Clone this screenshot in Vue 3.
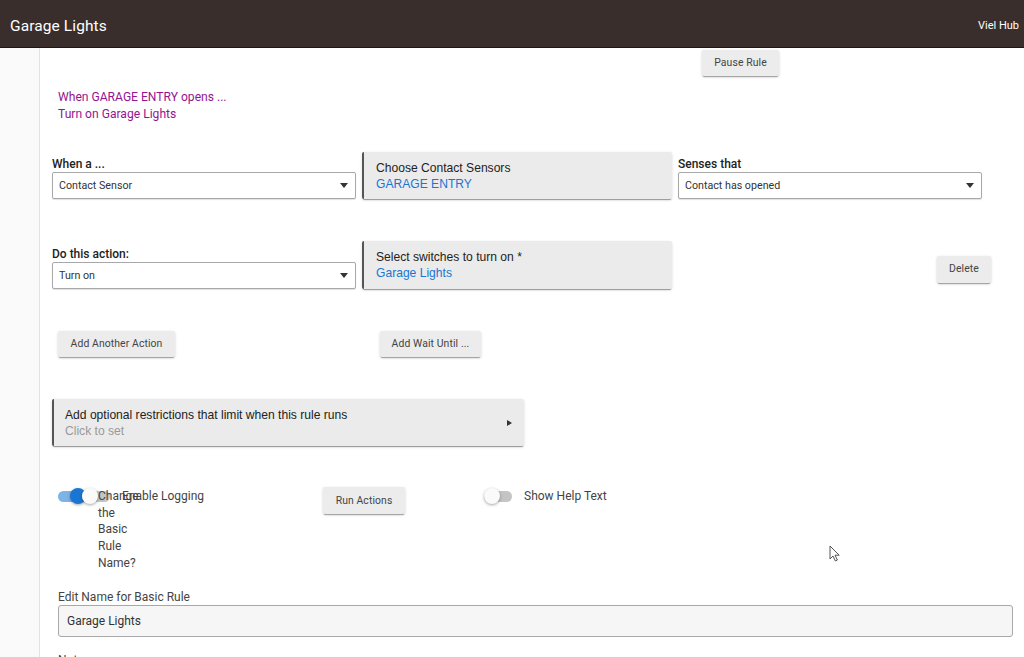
<script setup>
const pickers = [
  {
    id: 'trigger',
    label: 'When a ...',
    value: 'Contact Sensor',
    title: 'Choose Contact Sensors',
    link: 'GARAGE ENTRY',
    sideLabel: 'Senses that',
    sideValue: 'Contact has opened'
  },
  {
    id: 'action',
    label: 'Do this action:',
    value: 'Turn on',
    title: 'Select switches to turn on *',
    link: 'Garage Lights'
  }
]
</script>

<template>
  <div class="page">
    <header class="topbar">
      <span class="title">Garage Lights</span>
      <span class="hub">Viel Hub</span>
    </header>
    <div class="body">
      <aside class="rail"></aside>
      <main class="content">
        <div class="pause-row"><button class="btn">Pause Rule</button></div>
        <p class="summary">When GARAGE ENTRY opens ...<br />Turn on Garage Lights</p>

        <section
          v-for="row in pickers"
          :key="row.id"
          class="picker-row"
          :class="'picker-row-' + row.id"
        >
          <div class="field">
            <div class="field-label">{{ row.label }}</div>
            <div class="select">
              <span>{{ row.value }}</span>
              <i class="caret"></i>
            </div>
          </div>
          <div class="card pick-card">
            <div class="card-title">{{ row.title }}</div>
            <div class="card-link">{{ row.link }}</div>
          </div>
          <div v-if="row.sideLabel" class="field">
            <div class="field-label">{{ row.sideLabel }}</div>
            <div class="select">
              <span>{{ row.sideValue }}</span>
              <i class="caret"></i>
            </div>
          </div>
          <button v-else class="btn delete">Delete</button>
        </section>

        <div class="action-row">
          <button class="btn add-action">Add Another Action</button>
          <button class="btn add-wait">Add Wait Until ...</button>
        </div>

        <div class="card restrict">
          <div>
            <div class="card-title">Add optional restrictions that limit when this rule runs</div>
            <div class="card-muted">Click to set</div>
          </div>
          <i class="arrow"></i>
        </div>

        <div class="toggle-row">
          <div class="toggle-stack">
            <div class="toggle-item logging">
              <span class="toggle on"><i></i></span>
              <span class="toggle-label">Enable Logging</span>
            </div>
            <div class="toggle-item rename">
              <span class="toggle"><i></i></span>
              <span class="toggle-label narrow">Change the Basic Rule Name?</span>
            </div>
          </div>
          <button class="btn run">Run Actions</button>
          <div class="toggle-item help">
            <span class="toggle"><i></i></span>
            <span class="toggle-label">Show Help Text</span>
          </div>
          <svg class="pointer" width="12" height="18" viewBox="0 0 12 18">
            <path d="M1 1v13l3-3 2.4 5 2-1-2.400-4.800h4.200z" fill="#fff" stroke="#555" stroke-width="1" />
          </svg>
        </div>

        <label class="name-label">Edit Name for Basic Rule</label>
        <div class="name-input">Garage Lights</div>
        <div class="notes">Notes</div>
      </main>
    </div>
  </div>
</template>

<style>
html, body { margin: 0; background: #fff; }
</style>

<style scoped>
.page {
  width: 1024px;
  height: 657px;
  overflow: hidden;
  display: flex;
  flex-direction: column;
  font-family: Roboto, "Liberation Sans", sans-serif;
  color: #333;
  background: #fff;
}
.topbar {
  flex: none;
  box-sizing: content-box;
  height: 43px;
  border-bottom: 1px solid #1d1715;
  background: #3a2e2c;
  color: #fff;
  display: flex;
  align-items: center;
  justify-content: space-between;
  padding: 4px 5px 0 10px;
}
.title { font-size: 15.500px; letter-spacing: 0.1px; }
.hub { font-size: 11px; }
.body { flex: 1; display: flex; min-height: 0; }
.rail {
  flex: none;
  width: 39px;
  background: #fafafa;
  border-right: 1px solid #e2e2e2;
}
.content { flex: 1; min-width: 0; padding-left: 12px; }
.btn {
  display: block;
  box-sizing: border-box;
  height: 26px;
  padding: 0 0 2px;
  border: 0;
  border-radius: 2px;
  background: #ececec;
  color: #444;
  font: 400 10.400px Roboto, sans-serif;
  letter-spacing: 0.1px;
  box-shadow: 0 2px 1px -1px rgba(0,0,0,.3), 0 1px 3px rgba(0,0,0,.18);
}
.pause-row { padding: 2px 0 0 650px; }
.pause-row .btn { width: 77px; }
.summary {
  margin: 13px 0 0 6px;
  color: #94148f;
  font-size: 12.100px;
  line-height: 17px;
}
.picker-row { display: flex; align-items: flex-end; }
.picker-row-trigger { margin-top: 29px; }
.picker-row-action { margin-top: 42px; }
.field { width: 304px; }
.field-label {
  font: 500 12px/14px Roboto, sans-serif;
  color: #222;
  margin-bottom: 1px;
}
.select {
  box-sizing: border-box;
  height: 27px;
  border: 1px solid #a8a8a8;
  border-radius: 2px;
  box-shadow: 0 1px 1px rgba(0,0,0,.12);
  padding: 0 7px 0 6px;
  display: flex;
  align-items: center;
  justify-content: space-between;
  font-size: 10.700px;
  color: #333;
  background: #fff;
}
.caret {
  width: 0;
  height: 0;
  border: 4.500px solid transparent;
  border-top: 5px solid #333;
  border-bottom: 0;
}
.card {
  box-sizing: border-box;
  background: #ebebeb;
  border-left: 2px solid #555;
  border-radius: 2px;
  box-shadow: 0 2px 1px -1px rgba(0,0,0,.35), 0 1px 3px rgba(0,0,0,.15);
  font-family: "Liberation Sans", sans-serif;
  font-size: 12.100px;
  line-height: 16px;
}
.pick-card {
  width: 310px;
  height: 47px;
  margin: 0 6px 0 6px;
  padding: 8px 12px;
}
.picker-row-action .pick-card { height: 48px; }
.card-title { color: #222; }
.card-link { color: #1976d2; }
.card-muted { color: #999; }
.delete { width: 54px; height: 27px; margin: 0 0 6px 259px; }
.action-row { display: flex; margin: 42px 0 0 6px; }
.add-action { width: 117px; }
.add-wait { width: 101px; margin-left: 205px; }
.restrict {
  width: 472px;
  height: 47px;
  margin-top: 42px;
  padding: 8px 12px 8px 11px;
  display: flex;
  align-items: center;
  justify-content: space-between;
}
.arrow {
  width: 0;
  height: 0;
  border-left: 5px solid #333;
  border-top: 3px solid transparent;
  border-bottom: 3px solid transparent;
}
.toggle-row {
  position: relative;
  display: flex;
  align-items: flex-start;
  height: 102px;
  margin: 42px 0 0 6px;
}
.toggle-stack { display: grid; width: 265px; }
.toggle-stack .toggle-item { grid-area: 1 / 1; }
.toggle-item {
  display: flex;
  align-items: flex-start;
  font-size: 12px;
  line-height: 16.700px;
  color: #444;
}
.toggle {
  flex: none;
  position: relative;
  display: block;
  width: 28px;
  height: 11px;
  margin-top: 3px;
  border-radius: 6px;
  background: #c4c4c4;
}
.toggle i {
  position: absolute;
  top: -3px;
  left: 0;
  width: 16px;
  height: 16px;
  border-radius: 50%;
  background: #fafafa;
  box-shadow: 0 1px 3px rgba(0,0,0,.35);
}
.toggle.on { background: #7eb3e6; }
.toggle.on i { left: 12px; background: #1976d2; }
.logging .toggle-label { margin-left: 36px; }
.rename { padding-left: 24px; }
.rename .toggle-label { position: relative; margin-left: -12px; width: 40px; }
.run { width: 82px; height: 27px; margin-top: -1px; padding: 0; }
.help { margin-left: 79px; }
.help .toggle-label { margin-left: 12px; }
.pointer { position: absolute; left: 771px; top: 57px; }
.name-label { display: block; margin-left: 6px; font-size: 12px; line-height: 14px; color: #444; }
.name-input {
  box-sizing: border-box;
  width: 955px;
  height: 32px;
  margin: 1px 0 0 6px;
  border: 1px solid #a8a8a8;
  border-radius: 3px;
  background: #f6f6f6;
  padding: 0 8px;
  font-size: 12px;
  line-height: 31px;
  color: #333;
}
.notes { margin: 16px 0 0 6px; font-size: 12px; color: #444; }
</style>
